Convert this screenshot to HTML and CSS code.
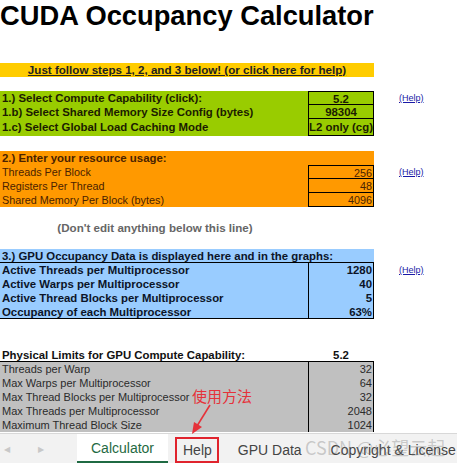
FILE: index.html
```html
<!DOCTYPE html>
<html lang="en">
<head>
    <meta charset="UTF-8">
    <meta name="viewport" content="width=device-width, initial-scale=1.0">
    <title>CUDA Occupancy Calculator</title>
    <link rel="stylesheet" href="styles.css">
</head>
<body>
    <div class="sheet">
        <h1 class="title">CUDA Occupancy Calculator</h1>

        <div class="banner"><a href="#">Just follow steps 1, 2, and 3 below! (or click here for help)</a></div>

        <!-- step 1 -->
        <div class="block green">
            <div class="row">
                <span class="label">1.) Select Compute Capability (click):</span>
                <span class="val center first">5.2</span>
                <a class="help" href="#">(Help)</a>
            </div>
            <div class="row">
                <span class="label">1.b) Select Shared Memory Size Config (bytes)</span>
                <span class="val center">98304</span>
            </div>
            <div class="row tall">
                <span class="label">1.c) Select Global Load Caching Mode</span>
                <span class="val center">L2 only (cg)</span>
            </div>
        </div>

        <!-- step 2 -->
        <div class="block orange">
            <div class="row head">
                <span class="label">2.) Enter your resource usage:</span>
                <span class="val plain"></span>
            </div>
            <div class="row">
                <span class="label">Threads Per Block</span>
                <span class="val first">256</span>
                <a class="help" href="#">(Help)</a>
            </div>
            <div class="row">
                <span class="label">Registers Per Thread</span>
                <span class="val">48</span>
            </div>
            <div class="row">
                <span class="label">Shared Memory Per Block (bytes)</span>
                <span class="val">4096</span>
            </div>
        </div>

        <div class="note">(Don't edit anything below this line)</div>

        <!-- step 3 -->
        <div class="block blue">
            <div class="row head">
                <span class="label">3.) GPU Occupancy Data is displayed here and in the graphs:</span>
            </div>
            <div class="box">
                <div class="row">
                    <span class="label">Active Threads per Multiprocessor</span>
                    <span class="val">1280</span>
                    <a class="help" href="#">(Help)</a>
                </div>
                <div class="row">
                    <span class="label">Active Warps per Multiprocessor</span>
                    <span class="val">40</span>
                </div>
                <div class="row">
                    <span class="label">Active Thread Blocks per Multiprocessor</span>
                    <span class="val">5</span>
                </div>
                <div class="row">
                    <span class="label">Occupancy of each Multiprocessor</span>
                    <span class="val">63%</span>
                </div>
            </div>
        </div>

        <!-- limits -->
        <div class="block grey">
            <div class="row head">
                <span class="label">Physical Limits for GPU Compute Capability:</span>
                <span class="val center">5.2</span>
            </div>
            <div class="box">
                <div class="row">
                    <span class="label">Threads per Warp</span>
                    <span class="val">32</span>
                </div>
                <div class="row">
                    <span class="label">Max Warps per Multiprocessor</span>
                    <span class="val">64</span>
                </div>
                <div class="row">
                    <span class="label">Max Thread Blocks per Multiprocessor</span>
                    <span class="val">32</span>
                </div>
                <div class="row">
                    <span class="label">Max Threads per Multiprocessor</span>
                    <span class="val">2048</span>
                </div>
                <div class="row">
                    <span class="label">Maximum Thread Block Size</span>
                    <span class="val">1024</span>
                </div>
            </div>
        </div>

        <div class="tabs">
            <div class="navs">
                <span class="nav">&#9664;</span>
                <span class="nav">&#9654;</span>
            </div>
            <span class="tab active">Calculator</span>
            <span class="tab marked">Help</span>
            <span class="sep"></span>
            <span class="tab">GPU Data</span>
            <span class="sep"></span>
            <span class="tab">Copyright &amp; License</span>
        </div>

        <!-- annotation drawn over the sheet -->
        <div class="callout">使用方法</div>
        <svg class="arrow" width="30" height="32" viewBox="0 0 30 32">
            <line x1="19" y1="1" x2="6" y2="22" stroke="#e5323a" stroke-width="1.6"/>
            <polygon points="1,30 3,18 11,23" fill="#e5323a"/>
        </svg>
        <div class="watermark">CSDN @必望云起</div>
    </div>
</body>
</html>
```

FILE: styles.css
```css
body {
    margin: 0;
    font-family: "Liberation Sans", Arial, sans-serif;
    background: #fff;
}
.sheet {
    position: relative;
    width: 457px;
    height: 463px;
    overflow: hidden;
}
.title {
    margin: 0;
    font-size: 27.3px;
    line-height: 32px;
    font-weight: bold;
    color: #000;
}
.banner {
    margin-top: 31px;
    width: 374px;
    height: 14px;
    background: #ffcc00;
    text-align: center;
    font-size: 11.6px;
    font-weight: bold;
    line-height: 14px;
}
.banner a {
    color: #222;
}
.block {
    width: 374px;
    font-size: 11.4px;
    line-height: 14px;
}
.row {
    display: flex;
    height: 14px;
    width: 457px;
}
.row.tall {
    height: 17px;
    line-height: 17px;
}
.label {
    box-sizing: border-box;
    width: 308px;
    padding-left: 2px;
    white-space: nowrap;
}
.val {
    box-sizing: border-box;
    width: 66px;
    text-align: right;
    padding-right: 1px;
    border-left: 1px solid #000;
    border-right: 1px solid #000;
    border-bottom: 1px solid #000;
    white-space: nowrap;
}
.val.first {
    border-top: 1px solid #000;
}
.val.center {
    text-align: center;
    padding-right: 0;
}
.help {
    margin-left: 25px;
    font-size: 9px;
    font-weight: normal;
    color: #1a1aa6;
}

/* step 1 */
.green {
    margin-top: 14px;
    font-weight: bold;
    color: #1c1c00;
}
.green .label,
.green .val {
    background: #99cc00;
}

/* step 2 */
.orange {
    margin-top: 15px;
    font-size: 10.8px;
    color: #4a2200;
}
.orange .label,
.orange .val {
    background: #ff9900;
}
.orange .head {
    font-weight: bold;
    font-size: 11.4px;
}
.orange .head .val {
    border: none;
}

.note {
    width: 310px;
    margin-top: 14px;
    height: 14px;
    line-height: 14px;
    text-align: center;
    font-size: 11.6px;
    font-weight: bold;
    color: #666;
}

/* step 3 */
.blue {
    margin-top: 14px;
    font-weight: bold;
    color: #0c1428;
}
.blue .head .label {
    width: 374px;
    background: #99ccff;
    border-bottom: 1px solid #000;
}
.blue .box .label,
.blue .box .val {
    background: #99ccff;
}
.box .val {
    border-bottom: none;
}
.box .row:last-child .label,
.box .row:last-child .val {
    border-bottom: 1px solid #000;
}

/* limits */
.grey {
    margin-top: 29px;
    font-size: 11px;
    color: #2b2b2b;
}
.grey .head {
    font-weight: bold;
    font-size: 11.4px;
    color: #111;
}
.grey .head .label,
.grey .head .val {
    background: #fff;
    border: none;
    border-bottom: 1px solid #000;
}
.grey .box .label,
.grey .box .val {
    background: #c0c0c0;
}
.grey .box .row:last-child .label,
.grey .box .row:last-child .val {
    border-bottom: none;
}

/* sheet tabs */
.tabs {
    display: flex;
    align-items: center;
    height: 31px;
    margin-top: 1px;
    background: #f2f2f2;
    border-top: 1px solid #d8d8d8;
    font-size: 14px;
    color: #444;
    white-space: nowrap;
}
.navs {
    display: flex;
    width: 77px;
    flex-shrink: 0;
}
.nav {
    font-size: 8px;
    color: #c8c8c8;
    width: 30px;
    padding-left: 4px;
}
.tab {
    padding: 0 10px;
    line-height: 26px;
}
.tab.active {
    width: 91px;
    flex-shrink: 0;
    box-sizing: border-box;
    padding: 0;
    text-align: center;
    background: #fff;
    color: #1f6a43;
    height: 29px;
    line-height: 28px;
    border-bottom: 2px solid #1f6a43;
    align-self: flex-start;
}
.tab.marked {
    margin-left: 7px;
    padding: 0 5px 0 6px;
    border: 2px solid #e0232d;
    height: 26px;
    box-sizing: border-box;
    line-height: 22px;
}
.sep {
    width: 1px;
    height: 18px;
    background: #b0b0b0;
    margin-left: 9px;
}

.callout {
    position: absolute;
    left: 192px;
    top: 386px;
    font-family: "Noto Sans CJK SC", sans-serif;
    font-size: 15px;
    line-height: 20px;
    color: #e5323a;
}
.arrow {
    position: absolute;
    left: 191px;
    top: 404px;
}
.watermark {
    position: absolute;
    left: 305px;
    top: 434px;
    font-family: "Noto Sans CJK SC", sans-serif;
    font-size: 18px;
    color: rgba(120, 120, 120, 0.35);
}
```
